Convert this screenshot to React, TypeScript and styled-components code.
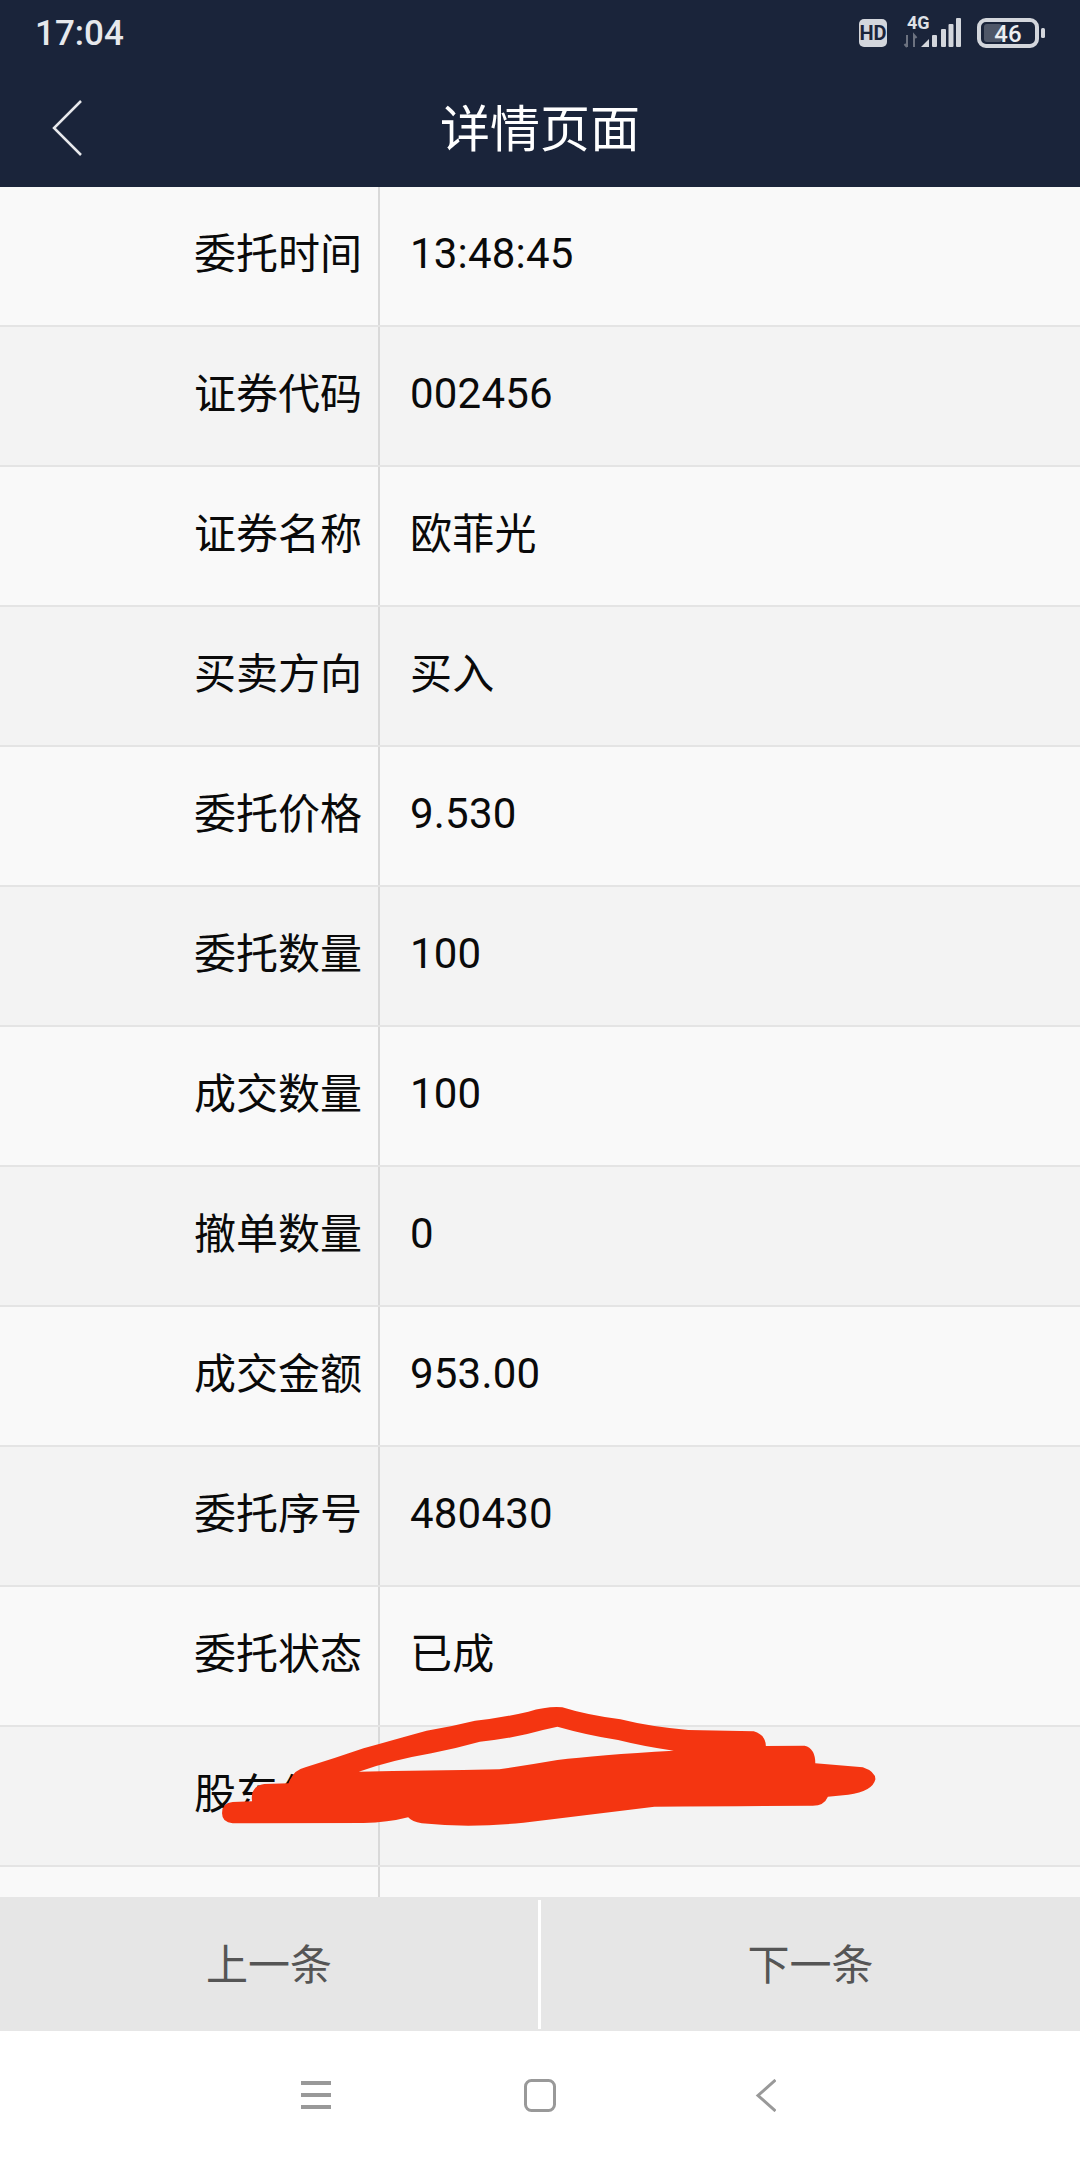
import React from "react";
import styled, { createGlobalStyle } from "styled-components";

const Global = createGlobalStyle`
  html, body { margin: 0; padding: 0; background: #fff; }
  * { box-sizing: border-box; }
`;

const Page = styled.div`
  position: relative;
  width: 1080px;
  height: 2160px;
  display: flex;
  flex-direction: column;
  overflow: hidden;
  font-family: Roboto, "Noto Sans CJK SC", sans-serif;
`;

const Top = styled.header`
  height: 187px;
  flex: none;
  background: #1a243a;
  display: flex;
  flex-direction: column;
`;

const StatusBar = styled.div`
  height: 66px;
  padding: 0 35px 0 35px;
  display: flex;
  align-items: center;
  justify-content: space-between;
`;

const Time = styled.span`
  font-size: 35px;
  font-weight: 500;
  color: #e6e8ec;
`;

const StatusIcons = styled.div`
  display: flex;
  align-items: center;
  gap: 14px;
`;

const TitleBar = styled.div`
  position: relative;
  flex: 1;
  display: flex;
  align-items: center;
  justify-content: center;
`;

const Title = styled.h1`
  margin: 0 0 4px;
  font-size: 50px;
  font-weight: 400;
  color: #fff;
`;

const BackButton = styled.svg`
  position: absolute;
  left: 50px;
  top: 33px;
`;

const List = styled.main`
  flex: 1;
  min-height: 0;
  overflow: hidden;
`;

const Row = styled.div<{ $even: boolean }>`
  height: 140px;
  display: grid;
  grid-template-columns: 380px 1fr;
  background: ${(p) => (p.$even ? "#f3f3f3" : "#f9f9f9")};
  border-bottom: 2px solid #e4e4e4;
`;

const Label = styled.div`
  border-right: 2px solid #d9d9d9;
  padding: 0 16px 12px 0;
  display: flex;
  align-items: center;
  justify-content: flex-end;
  font-size: 42px;
  color: #0a0a0a;
`;

const Value = styled.div<{ $cjk: boolean }>`
  padding: 0 0 ${(p) => (p.$cjk ? "12px" : "6px")} 30px;
  display: flex;
  align-items: center;
  font-size: 42px;
  letter-spacing: 0.2px;
  color: #0a0a0a;
`;

const Footer = styled.div`
  height: 134px;
  flex: none;
  padding: 3px 0 2px;
  background: #e6e6e6;
  display: grid;
  grid-template-columns: 1fr 1fr;
`;

const PagerButton = styled.div<{ $first?: boolean }>`
  display: flex;
  align-items: center;
  justify-content: center;
  padding-bottom: 6px;
  font-size: 42px;
  color: #555;
  ${(p) => (p.$first ? "border-right: 2px solid #fff;" : "border-left: 1px solid #fff;")}
`;

const NavBar = styled.nav`
  height: 129px;
  flex: none;
  background: #fff;
  display: grid;
  grid-template-columns: repeat(3, 224px);
  justify-content: center;
  justify-items: center;
  padding-top: 48px;
  align-items: start;
`;

const Scribble = styled.svg`
  position: absolute;
  left: 160px;
  top: 1680px;
  pointer-events: none;
`;

const rows: [string, string][] = [
  ["委托时间", "13:48:45"],
  ["证券代码", "002456"],
  ["证券名称", "欧菲光"],
  ["买卖方向", "买入"],
  ["委托价格", "9.530"],
  ["委托数量", "100"],
  ["成交数量", "100"],
  ["撤单数量", "0"],
  ["成交金额", "953.00"],
  ["委托序号", "480430"],
  ["委托状态", "已成"],
  ["股东代码", ""],
  ["", ""],
];

const scribbleOuter =
  "M128 400 Q128 368 150 366 L190 364 Q185 320 215 312 L265 310 Q275 270 300 262 Q360 235 420 205 Q480 180 550 152 Q600 140 650 122 Q700 115 760 95 Q800 78 830 82 Q880 105 950 118 Q1010 140 1090 150 L1225 154 Q1250 165 1250 198 L1330 197 Q1352 205 1352 250 L1450 262 Q1476 275 1476 298 Q1470 335 1420 344 L1378 350 Q1370 378 1345 377 Q1200 378 1020 380 Q880 405 750 428 Q640 445 540 430 Q520 425 512 412 Q470 428 420 429 L150 430 Q128 428 128 400 Z";
const scribbleHole =
  "M410 275 Q480 240 560 220 Q610 205 660 185 Q730 175 790 150 L820 140 Q880 165 945 180 Q1000 200 1060 212 Q900 225 820 240 Q760 255 700 268 Q550 272 410 275 Z";

export default function App() {
  return (
    <Page>
      <Global />
      <Top>
        <StatusBar>
          <Time>17:04</Time>
          <StatusIcons>
            <svg width="28" height="28" viewBox="0 0 28 28">
              <rect width="28" height="28" rx="5" fill="#d3d6dc" />
              <text x="14" y="21" textAnchor="middle" fontFamily="Roboto" fontWeight="700" fontSize="20" fill="#1a243a">HD</text>
            </svg>
            <svg width="62" height="44" viewBox="0 -5 62 44">
              <text x="6" y="12.5" fontFamily="Roboto" fontWeight="700" fontSize="18" fill="#dfe1e6">4G</text>
              <path d="M6 19v12M3.5 28l2.5 3M13 31V19l2.5 3" stroke="#6c7280" strokeWidth="2" fill="none" />
              <path d="M20 31l8-8v8z" fill="#d3d6dc" />
              <rect x="31" y="19" width="5" height="12" rx="1" fill="#d3d6dc" />
              <rect x="40" y="13" width="5" height="18" rx="1" fill="#d3d6dc" />
              <rect x="47.5" y="8" width="5" height="23" rx="1" fill="#d3d6dc" />
              <rect x="55" y="2" width="5" height="29" rx="1" fill="#d3d6dc" />
            </svg>
            <svg width="68" height="30" viewBox="0 0 68 30">
              <rect x="2" y="2" width="58" height="26" rx="7" fill="none" stroke="#d3d6dc" strokeWidth="4" />
              <rect x="7" y="6" width="18" height="18" rx="3" fill="#4f5768" />
              <rect x="64" y="10" width="4" height="10" rx="1.5" fill="#d3d6dc" />
              <text x="31" y="24" textAnchor="middle" fontFamily="Roboto" fontWeight="500" fontSize="24" fill="#eceef1">46</text>
            </svg>
          </StatusIcons>
        </StatusBar>
        <TitleBar>
          <BackButton width="34" height="58" viewBox="0 0 34 58">
            <path d="M31 3L4 30l27 27" transform="translate(0 -1)" fill="none" stroke="#e8e9ec" strokeWidth="2.5" />
          </BackButton>
          <Title>详情页面</Title>
        </TitleBar>
      </Top>
      <List>
        {rows.map(([k, v], i) => (
          <Row key={i} $even={i % 2 === 1}>
            <Label>{k}</Label>
            <Value $cjk={/[^\d.:]/.test(v)}>{v}</Value>
          </Row>
        ))}
      </List>
      <Footer>
        <PagerButton $first>上一条</PagerButton>
        <PagerButton>下一条</PagerButton>
      </Footer>
      <NavBar>
        <svg width="30" height="32" viewBox="0 0 30 32">
          <path d="M0 4h30M0 16h30M0 28h30" stroke="#999" strokeWidth="4" />
        </svg>
        <svg width="32" height="33" viewBox="0 0 32 33">
          <rect x="1.5" y="1.5" width="29" height="30" rx="6" fill="none" stroke="#999" strokeWidth="3" />
        </svg>
        <svg width="24" height="33" viewBox="0 0 24 33">
          <path d="M23.5 1L6 16.5 23.5 32" fill="none" stroke="#999" strokeWidth="3" />
        </svg>
      </NavBar>
      <Scribble width="760" height="200" viewBox="0 0 1568 600" preserveAspectRatio="none">
        <path d={`${scribbleOuter} ${scribbleHole}`} fill="#f43511" fillRule="evenodd" />
      </Scribble>
    </Page>
  );
}
